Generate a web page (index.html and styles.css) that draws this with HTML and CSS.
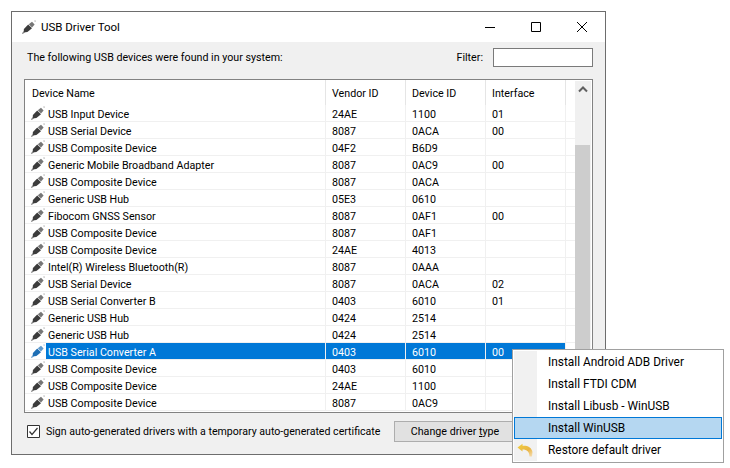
FILE: index.html
```html
<!DOCTYPE html>
<html lang="en">
<head>
<meta charset="utf-8">
<title>USB Driver Tool</title>
<link rel="stylesheet" href="styles.css">
</head>
<body>
<svg class="defs" width="0" height="0" aria-hidden="true">
  <defs>
    <linearGradient id="undoFill" x1="0" y1="0" x2="1" y2="1">
      <stop offset="0" stop-color="#f2cf3e"/>
      <stop offset=".6" stop-color="#e9b544"/>
      <stop offset="1" stop-color="#f6dfb8"/>
    </linearGradient>
  </defs>
  <symbol id="plug" viewBox="0 0 14 14">
    <path d="M0.3 13.7L2.6 11.4" stroke="currentColor" stroke-width="1.4" opacity=".55"/>
    <path d="M1.6 12.4L1.9 8.9L6.2 4.6L10 8.2L5.4 12Z" fill="currentColor"/>
    <path d="M6.8 4.2L10 1.8L12.6 4.4L10 7.6Z" fill="currentColor" opacity=".7"/>
    <path d="M12.3 .8L13.3 .3L13.7 1.3L13 1.9Z" fill="currentColor" opacity=".5"/>
  </symbol>
</svg>
<main class="window">
  <header class="titlebar">
    <svg class="title-icon"><use href="#plug"/></svg>
    <span class="title">USB Driver Tool</span>
    <div class="controls">
      <svg class="ctl" viewBox="0 0 46 30"><path d="M18 15.5H28" stroke="#000" fill="none"/></svg>
      <svg class="ctl" viewBox="0 0 46 30"><path d="M18.5 10.5h9v9h-9z" stroke="#000" fill="none"/></svg>
      <svg class="ctl" viewBox="0 0 46 30"><path d="M18 10l10 10M28 10L18 20" stroke="#000" fill="none"/></svg>
    </div>
  </header>
  <div class="client">
    <div class="toprow">
      <span class="found">The following USB devices were found in your system:</span>
      <label class="filter-label" for="filter">Filter:</label>
      <input class="filter" id="filter" type="text">
    </div>
    <section class="list">
      <div class="table">
        <div class="row head">
          <div class="cell name">Device Name</div><div class="cell vid">Vendor ID</div><div class="cell did">Device ID</div><div class="cell ifc">Interface</div><div class="cell rest"></div>
        </div>
        <div class="row"><div class="cell name"><svg class="plug"><use href="#plug"/></svg><span>USB Input Device</span></div><div class="cell vid">24AE</div><div class="cell did">1100</div><div class="cell ifc">01</div><div class="cell rest"></div></div>
        <div class="row"><div class="cell name"><svg class="plug"><use href="#plug"/></svg><span>USB Serial Device</span></div><div class="cell vid">8087</div><div class="cell did">0ACA</div><div class="cell ifc">00</div><div class="cell rest"></div></div>
        <div class="row"><div class="cell name"><svg class="plug"><use href="#plug"/></svg><span>USB Composite Device</span></div><div class="cell vid">04F2</div><div class="cell did">B6D9</div><div class="cell ifc"></div><div class="cell rest"></div></div>
        <div class="row"><div class="cell name"><svg class="plug"><use href="#plug"/></svg><span>Generic Mobile Broadband Adapter</span></div><div class="cell vid">8087</div><div class="cell did">0AC9</div><div class="cell ifc">00</div><div class="cell rest"></div></div>
        <div class="row"><div class="cell name"><svg class="plug"><use href="#plug"/></svg><span>USB Composite Device</span></div><div class="cell vid">8087</div><div class="cell did">0ACA</div><div class="cell ifc"></div><div class="cell rest"></div></div>
        <div class="row"><div class="cell name"><svg class="plug"><use href="#plug"/></svg><span>Generic USB Hub</span></div><div class="cell vid">05E3</div><div class="cell did">0610</div><div class="cell ifc"></div><div class="cell rest"></div></div>
        <div class="row"><div class="cell name"><svg class="plug"><use href="#plug"/></svg><span>Fibocom GNSS Sensor</span></div><div class="cell vid">8087</div><div class="cell did">0AF1</div><div class="cell ifc">00</div><div class="cell rest"></div></div>
        <div class="row"><div class="cell name"><svg class="plug"><use href="#plug"/></svg><span>USB Composite Device</span></div><div class="cell vid">8087</div><div class="cell did">0AF1</div><div class="cell ifc"></div><div class="cell rest"></div></div>
        <div class="row"><div class="cell name"><svg class="plug"><use href="#plug"/></svg><span>USB Composite Device</span></div><div class="cell vid">24AE</div><div class="cell did">4013</div><div class="cell ifc"></div><div class="cell rest"></div></div>
        <div class="row"><div class="cell name"><svg class="plug"><use href="#plug"/></svg><span>Intel(R) Wireless Bluetooth(R)</span></div><div class="cell vid">8087</div><div class="cell did">0AAA</div><div class="cell ifc"></div><div class="cell rest"></div></div>
        <div class="row"><div class="cell name"><svg class="plug"><use href="#plug"/></svg><span>USB Serial Device</span></div><div class="cell vid">8087</div><div class="cell did">0ACA</div><div class="cell ifc">02</div><div class="cell rest"></div></div>
        <div class="row"><div class="cell name"><svg class="plug"><use href="#plug"/></svg><span>USB Serial Converter B</span></div><div class="cell vid">0403</div><div class="cell did">6010</div><div class="cell ifc">01</div><div class="cell rest"></div></div>
        <div class="row"><div class="cell name"><svg class="plug"><use href="#plug"/></svg><span>Generic USB Hub</span></div><div class="cell vid">0424</div><div class="cell did">2514</div><div class="cell ifc"></div><div class="cell rest"></div></div>
        <div class="row"><div class="cell name"><svg class="plug"><use href="#plug"/></svg><span>Generic USB Hub</span></div><div class="cell vid">0424</div><div class="cell did">2514</div><div class="cell ifc"></div><div class="cell rest"></div></div>
        <div class="row selected"><div class="cell name"><svg class="plug"><use href="#plug"/></svg><span>USB Serial Converter A</span></div><div class="cell vid">0403</div><div class="cell did">6010</div><div class="cell ifc">00</div><div class="cell rest"></div></div>
        <div class="row"><div class="cell name"><svg class="plug"><use href="#plug"/></svg><span>USB Composite Device</span></div><div class="cell vid">0403</div><div class="cell did">6010</div><div class="cell ifc"></div><div class="cell rest"></div></div>
        <div class="row"><div class="cell name"><svg class="plug"><use href="#plug"/></svg><span>USB Composite Device</span></div><div class="cell vid">24AE</div><div class="cell did">1100</div><div class="cell ifc"></div><div class="cell rest"></div></div>
        <div class="row"><div class="cell name"><svg class="plug"><use href="#plug"/></svg><span>USB Composite Device</span></div><div class="cell vid">8087</div><div class="cell did">0AC9</div><div class="cell ifc"></div><div class="cell rest"></div></div>
      </div>
      <div class="scrollbar">
        <svg class="arrow" viewBox="0 0 16 17"><path d="M4 10.5L8 6.5L12 10.5" fill="none" stroke="#606060" stroke-width="2"/></svg>
        <div class="track"><div class="thumb"></div></div>
      </div>
    </section>
    <div class="bottomrow">
      <label class="check">
        <svg class="box" viewBox="0 0 13 13"><path d="M.5.5h12v12H.5z" fill="#fff" stroke="#333"/><path d="M2.5 6.5L5 9.5L10.5 3" fill="none" stroke="#333" stroke-width="1.2"/></svg>
        <span>Sign auto-generated drivers with a temporary auto-generated certificate</span>
      </label>
      <button class="change" type="button">Change driver <u>t</u>ype</button>
    </div>
  </div>
</main>
<nav class="menu">
  <div class="item"><span>Install Android ADB Driver</span></div>
  <div class="item"><span>Install FTDI CDM</span></div>
  <div class="item"><span>Install Libusb - WinUSB</span></div>
  <div class="item hot"><span>Install WinUSB</span></div>
  <div class="item">
    <svg class="undo" viewBox="0 0 16 14"><path d="M0.5 4.5L5.5 0.8L5.5 2.8C10 2.3 14.5 4 15.5 9L15 13.5L12.5 13.5C12.5 9 10 6.5 5.5 6.5L5.5 8.5Z" fill="url(#undoFill)"/></svg>
    <span>Restore default driver</span>
  </div>
</nav>
</body>
</html>
```

FILE: styles.css
```css
* { box-sizing: border-box; }
html, body { margin: 0; height: 100%; background: #fff; overflow: hidden; }
body {
  position: relative;
  padding: 11px 0 0 11px;
  font: 10.7px Roboto, "Liberation Sans", sans-serif;
  color: #000;
}
.defs { position: absolute; }
.window {
  width: 595px;
  height: 444px;
  border: 1px solid #6d6d6d;
  background: #f0f0f0;
  display: flex;
  flex-direction: column;
}
.titlebar {
  height: 30px;
  flex: none;
  background: #fff;
  display: flex;
  align-items: center;
  padding-left: 10px;
}
.title-icon { width: 14px; height: 14px; color: #3c3c3c; }
.title { margin-left: 5px; font-size: 11.5px; margin-top: -1px; }
.controls { margin-left: auto; display: flex; }
.ctl { width: 46px; height: 30px; }
.client {
  flex: 1;
  display: flex;
  flex-direction: column;
  padding: 6px 12px 0 12px;
}
.toprow { display: flex; align-items: center; height: 19px; padding-left: 3px; }
.filter-label { margin-left: auto; margin-right: 10px; }
.filter {
  width: 100px;
  height: 19px;
  border: 1px solid #7a7a7a;
  background: #fff;
  padding: 0;
}
.list {
  margin-top: 12px;
  height: 334px;
  border: 1px solid #828282;
  background: #fff;
  display: flex;
}
.table { flex: 1; min-width: 0; overflow: hidden; }
.row { display: flex; height: 17px; border-bottom: 1px solid #f0f0f0; align-items: center; }
.head { height: 25px; border-bottom: 0; }
.cell { height: 100%; display: flex; align-items: center; padding: 2px 0 0 6px; border-right: 1px solid #f0f0f0; white-space: nowrap; }
.head .cell { border-right-color: #e5e5e5; padding-top: 1px; }
.name { width: 301px; padding-left: 0; }
.row .name { padding-top: 0; }
.head .name { padding-left: 7px; padding-top: 1px; }
.vid { width: 80px; }
.did { width: 80px; }
.ifc { width: 80px; }
.rest { flex: 1; border-right: 0; }
.plug { width: 14px; height: 14px; color: #3c3c3c; margin: 0 2px 0 6px; flex: none; }
.row .name span { flex: 1; height: 100%; display: flex; align-items: center; padding: 2px 0 0 2px; margin-left: -1px; }
.selected .cell { background: #0078d7; color: #fff; }
.selected .name { background: #fff; }
.selected .name span { background: #0078d7; color: #fff; }
.selected .plug { color: #1e6fb5; }
.selected .rest { background: #fff; }
.scrollbar { width: 16px; margin: 1px 1px 0 0; background: #f0f0f0; display: flex; flex-direction: column; flex: none; }
.arrow { width: 16px; height: 17px; flex: none; }
.track { flex: 1; padding: 47px 1px 0 0; }
.thumb { height: 250px; background: #cdcdcd; }
.bottomrow { display: flex; align-items: center; margin-top: 8px; height: 21px; padding-left: 3px; }
.check { display: flex; align-items: center; gap: 6px; width: 367px; font-size: 10.6px; }
.box { width: 13px; height: 13px; flex: none; }
.change {
  width: 122px;
  height: 21px;
  border: 1px solid #adadad;
  background: #e1e1e1;
  font: inherit;
  color: #000;
  padding: 0;
}
.change u { text-decoration: underline; }
.menu {
  position: absolute;
  left: 512px;
  top: 349px;
  width: 212px;
  height: 114px;
  border: 1px solid #a0a0a0;
  background: #fff;
  padding: 1px 1px 0;
  display: flex;
  flex-direction: column;
  font-size: 11.9px;
}
.menu::before {
  content: "";
  position: absolute;
  left: 1px; top: 1px; bottom: 1px;
  width: 23px;
  background: #f1f1f1;
}
.item {
  position: relative;
  height: 22px;
  display: flex;
  align-items: center;
  padding-left: 33px;
  border: 1px solid transparent;
}
.hot { background: #b5d7f1; border-color: #0078d7; }
.undo { position: absolute; left: 2px; top: 3px; width: 16px; height: 14px; }
```
